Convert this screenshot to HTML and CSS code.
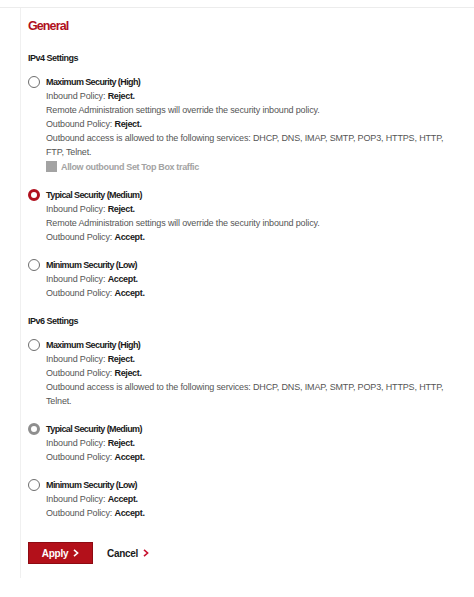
FILE: index.html
```html
<!DOCTYPE html>
<html>
<head>
<meta charset="utf-8">
<link rel="stylesheet" href="styles.css">
</head>
<body>
<div class="page">
  <div class="panel">
    <h2 class="title">General</h2>

    <h3 class="section">IPv4 Settings</h3>
    <div class="option">
      <div class="opt-head"><span class="radio"></span><span class="opt-name">Maximum Security (High)</span></div>
      <div class="line">Inbound Policy: <b>Reject.</b></div>
      <div class="line">Remote Administration settings will override the security inbound policy.</div>
      <div class="line">Outbound Policy: <b>Reject.</b></div>
      <div class="line">Outbound access is allowed to the following services: DHCP, DNS, IMAP, SMTP, POP3, HTTPS, HTTP, FTP, Telnet.</div>
      <div class="line check-line"><span class="checkbox"></span><span class="check-label">Allow outbound Set Top Box traffic</span></div>
    </div>
    <div class="option">
      <div class="opt-head"><span class="radio checked"></span><span class="opt-name">Typical Security (Medium)</span></div>
      <div class="line">Inbound Policy: <b>Reject.</b></div>
      <div class="line">Remote Administration settings will override the security inbound policy.</div>
      <div class="line">Outbound Policy: <b>Accept.</b></div>
    </div>
    <div class="option">
      <div class="opt-head"><span class="radio"></span><span class="opt-name">Minimum Security (Low)</span></div>
      <div class="line">Inbound Policy: <b>Accept.</b></div>
      <div class="line">Outbound Policy: <b>Accept.</b></div>
    </div>

    <h3 class="section">IPv6 Settings</h3>
    <div class="option">
      <div class="opt-head"><span class="radio"></span><span class="opt-name">Maximum Security (High)</span></div>
      <div class="line">Inbound Policy: <b>Reject.</b></div>
      <div class="line">Outbound Policy: <b>Reject.</b></div>
      <div class="line">Outbound access is allowed to the following services: DHCP, DNS, IMAP, SMTP, POP3, HTTPS, HTTP, Telnet.</div>
    </div>
    <div class="option">
      <div class="opt-head"><span class="radio checked-disabled"></span><span class="opt-name">Typical Security (Medium)</span></div>
      <div class="line">Inbound Policy: <b>Reject.</b></div>
      <div class="line">Outbound Policy: <b>Accept.</b></div>
    </div>
    <div class="option">
      <div class="opt-head"><span class="radio"></span><span class="opt-name">Minimum Security (Low)</span></div>
      <div class="line">Inbound Policy: <b>Accept.</b></div>
      <div class="line">Outbound Policy: <b>Accept.</b></div>
    </div>

    <div class="actions">
      <button class="btn-apply">Apply <svg class="chev" width="6" height="8" viewBox="0 0 6 8"><polyline points="1,0.8 4.6,4 1,7.2" fill="none" stroke="#fff" stroke-width="1.6"/></svg></button>
      <button class="btn-cancel">Cancel <svg class="chev" width="6" height="8" viewBox="0 0 6 8"><polyline points="1,0.8 4.6,4 1,7.2" fill="none" stroke="#c8102e" stroke-width="1.6"/></svg></button>
    </div>
  </div>
</div>
</body>
</html>
```

FILE: styles.css
```css
* { box-sizing: border-box; }
html, body { margin: 0; padding: 0; background: #fff; }
body {
  font-family: "Liberation Sans", Arial, sans-serif;
  color: #4a4a4a;
}
.page {
  margin-top: 7px;
  border-top: 1px solid #ececec;
}
.panel {
  margin-left: 20px;
  border-left: 1px solid #f0f0f0;
  padding: 10px 0 14px 7px;
  width: 440px;
}
.title {
  margin: 0;
  font-size: 12.5px;
  line-height: 17px;
  font-weight: bold;
  color: #b0101e;
  letter-spacing: -0.9px;
}
.section {
  margin: 16px 0 10px;
  font-size: 9px;
  line-height: 14px;
  font-weight: bold;
  color: #1a1a1a;
  letter-spacing: -0.5px;
}
.option + .section { margin-top: 0; }
.option {
  margin-bottom: 14px;
  padding-left: 18px;
  font-size: 9px;
  line-height: 14px;
}
.opt-head {
  position: relative;
  height: 14px;
}
.radio {
  position: absolute;
  left: -18px;
  top: 1px;
  width: 12px;
  height: 12px;
  border-radius: 50%;
  border: 1.2px solid #6e6e6e;
  background: #fff;
}
.radio.checked {
  border: 3px solid #b0101e;
}
.radio.checked-disabled {
  border: 3px solid #8e8e8e;
}
.opt-name {
  font-weight: bold;
  color: #1a1a1a;
  letter-spacing: -0.6px;
}
.line {
  color: #555;
  letter-spacing: -0.15px;
}
.line b {
  color: #1a1a1a;
  letter-spacing: -0.35px;
}
.check-line {
  display: flex;
  align-items: center;
  gap: 4px;
  height: 15px;
}
.checkbox {
  width: 11px;
  height: 11px;
  background: #a3a3a3;
}
.check-label {
  font-weight: bold;
  color: #a3a3a3;
  letter-spacing: -0.35px;
}
.actions {
  display: flex;
  align-items: center;
  gap: 14px;
  margin-top: 22px;
}
.btn-apply {
  width: 65px;
  height: 22px;
  background: #b3101a;
  border: 1px solid #8e0a12;
  color: #fff;
  font-family: "Liberation Sans", Arial, sans-serif;
  font-weight: bold;
  font-size: 10px;
  padding: 0;
  display: flex;
  align-items: center;
  justify-content: center;
  gap: 5px;
  letter-spacing: -0.3px;
}
.btn-cancel {
  background: none;
  border: 0;
  padding: 0;
  font-family: "Liberation Sans", Arial, sans-serif;
  font-weight: bold;
  font-size: 10px;
  color: #1a1a1a;
  display: flex;
  align-items: center;
  gap: 5px;
  letter-spacing: -0.3px;
}
.chev { display: block; }
```
